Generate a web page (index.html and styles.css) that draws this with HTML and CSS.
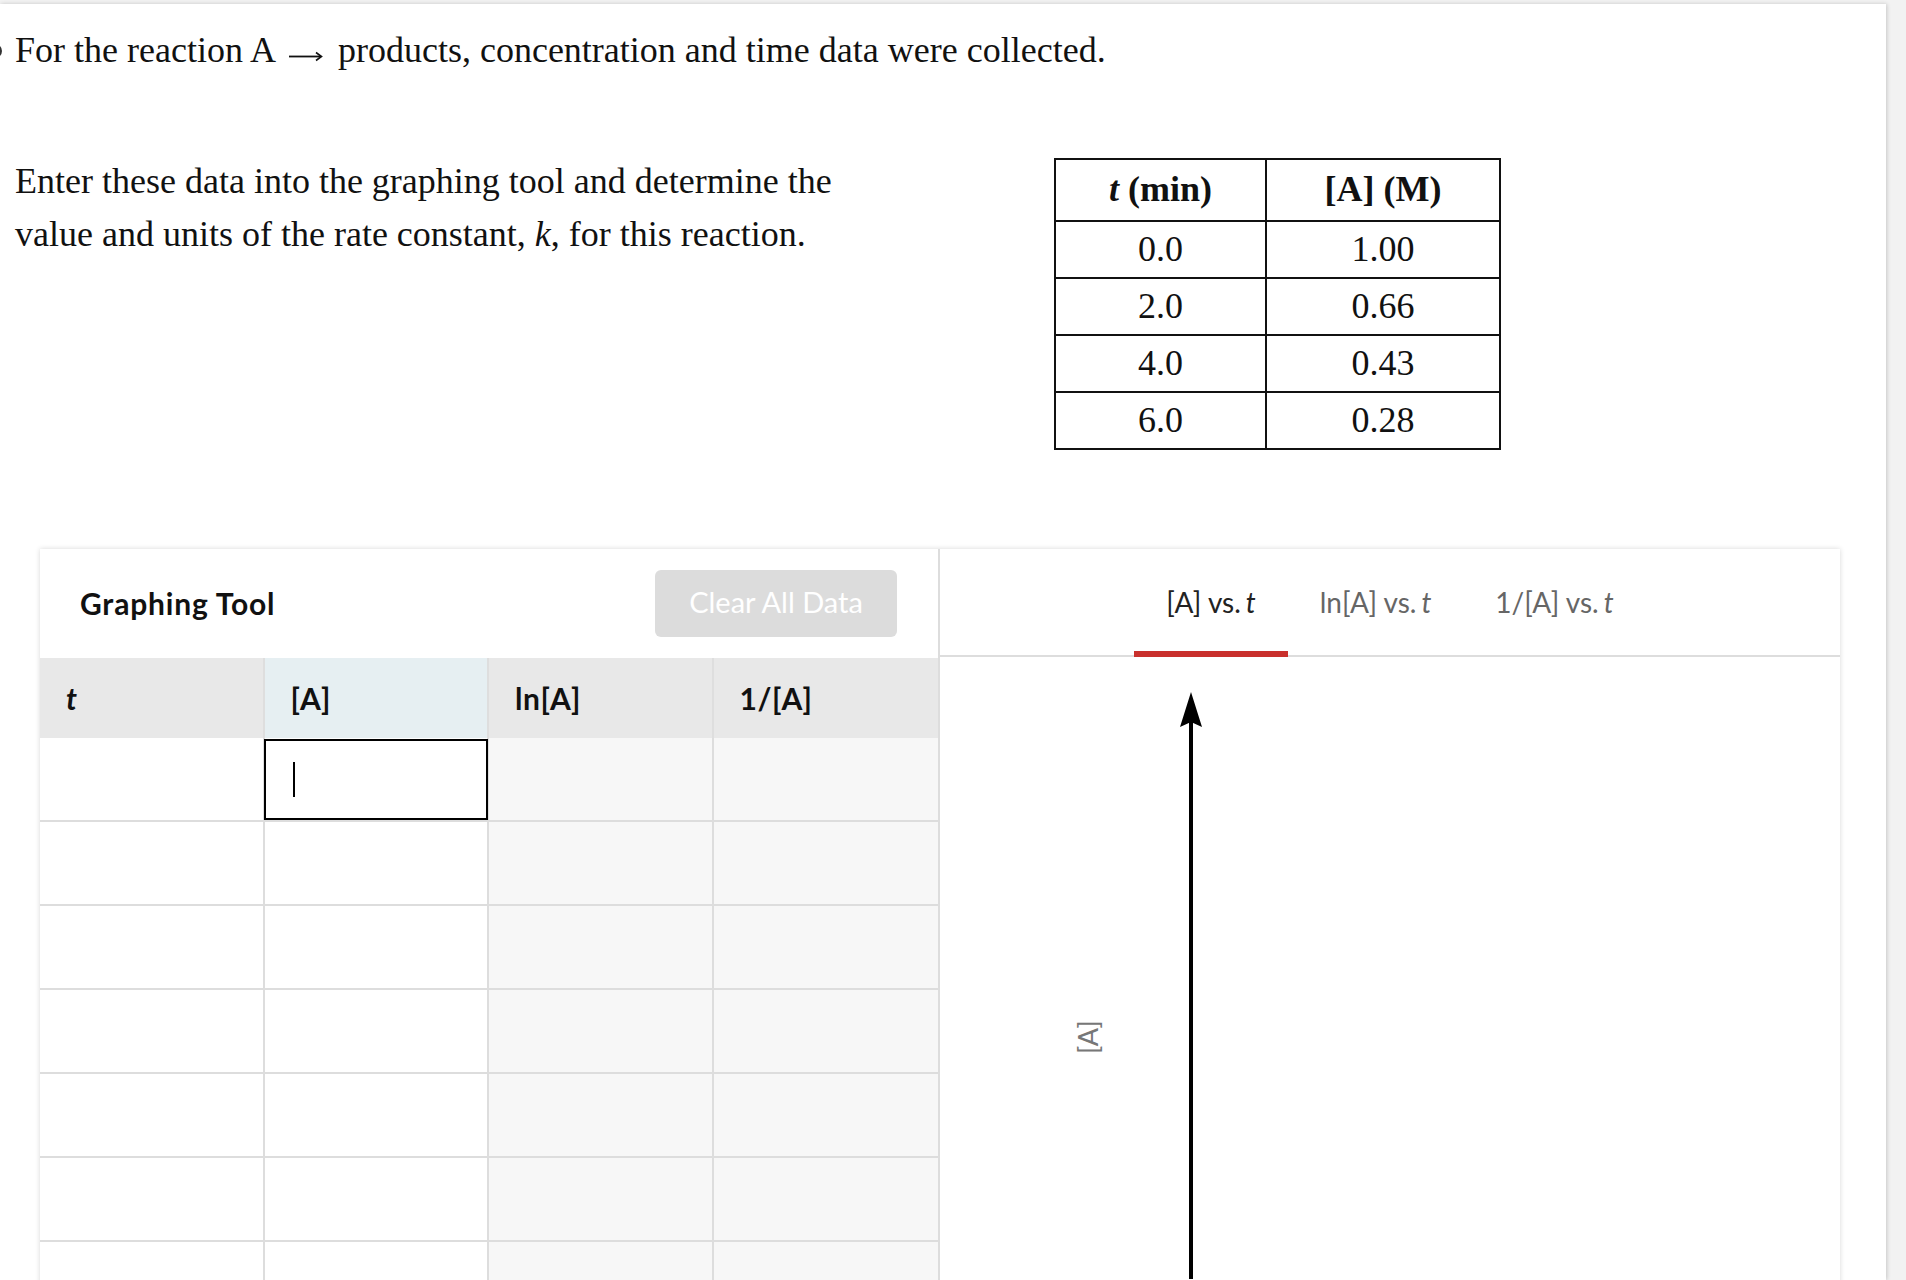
FILE: index.html
```html
<!DOCTYPE html>
<html lang="en">
<head>
<meta charset="utf-8">
<title>Graphing Tool</title>
<link rel="stylesheet" href="styles.css">
</head>
<body>
<div class="sheet">
  <p class="q1"><span class="dot"></span>For the reaction A <svg class="rarrow" width="34" height="12" viewBox="0 0 34 12"><path d="M0 6.5 H32" stroke="#111" stroke-width="1.8" fill="none"/><path d="M27 2.5 L32.5 6.5 L27 10.5" stroke="#111" stroke-width="1.6" fill="none"/></svg> products, concentration and time data were collected.</p>

  <div class="problem">
    <p class="qtext">Enter these data into the graphing tool and determine the<br>value and units of the rate constant, <i>k</i>, for this reaction.</p>
    <table class="data">
      <thead>
        <tr><th class="c1"><i>t</i> (min)</th><th class="c2">[A] (M)</th></tr>
      </thead>
      <tbody>
        <tr><td>0.0</td><td>1.00</td></tr>
        <tr><td>2.0</td><td>0.66</td></tr>
        <tr><td>4.0</td><td>0.43</td></tr>
        <tr><td>6.0</td><td>0.28</td></tr>
      </tbody>
    </table>
  </div>

  <div class="card">
    <div class="left">
      <div class="lhead">
        <h2 class="title">Graphing Tool</h2>
        <button class="clear" type="button">Clear All Data</button>
      </div>
      <div class="grid">
        <div class="hc"><i>t</i></div>
        <div class="hc sel">[A]</div>
        <div class="hc">ln[A]</div>
        <div class="hc last">1/[A]</div>

        <div class="dc"></div>
        <div class="dc"><div class="input"><span class="caret"></span></div></div>
        <div class="dc calc"></div>
        <div class="dc calc last"></div>

        <div class="dc"></div><div class="dc"></div><div class="dc calc"></div><div class="dc calc last"></div>
        <div class="dc"></div><div class="dc"></div><div class="dc calc"></div><div class="dc calc last"></div>
        <div class="dc"></div><div class="dc"></div><div class="dc calc"></div><div class="dc calc last"></div>
        <div class="dc"></div><div class="dc"></div><div class="dc calc"></div><div class="dc calc last"></div>
        <div class="dc"></div><div class="dc"></div><div class="dc calc"></div><div class="dc calc last"></div>
        <div class="dc"></div><div class="dc"></div><div class="dc calc"></div><div class="dc calc last"></div>
      </div>
    </div>
    <div class="right">
      <div class="tabs">
        <div class="tab active">[A] vs.<i class="var">t</i></div>
        <div class="tab">ln[A] vs.<i class="var">t</i></div>
        <div class="tab">1/[A] vs.<i class="var">t</i></div>
      </div>
      <svg class="plot" width="900" height="622" viewBox="0 0 900 622">
        <line x1="251" y1="64" x2="251" y2="622" stroke="#000" stroke-width="4"/>
        <path d="M251 35 L262 70 L251 65 L240 70 Z" fill="#000"/>
        <text x="147" y="380" transform="rotate(-90 147 380)" text-anchor="middle" dominant-baseline="central" class="axis">[A]</text>
      </svg>
    </div>
  </div>
</div>
</body>
</html>
```

FILE: styles.css
```css
html, body {
  margin: 0;
  padding: 0;
}
body {
  background: #f2f2f2;
  overflow: hidden;
}
.sheet {
  margin-top: 4px;
  width: 1886px;
  height: 1276px;
  background: #ffffff;
  box-shadow: 1px 0 4px rgba(0, 0, 0, 0.18);
  overflow: hidden;
  font-family: "Liberation Serif", "Times New Roman", serif;
  color: #111;
}
.q1 {
  margin: 0;
  padding-top: 22px;
  font-size: 36px;
  line-height: 48px;
  white-space: nowrap;
}
.dot {
  display: inline-block;
  width: 14px;
  height: 14px;
  border-radius: 50%;
  background: #333;
  margin-left: -12px;
  margin-right: 13px;
  vertical-align: 4px;
}
.rarrow {
  vertical-align: 0;
  margin: 0 6px;
}
.problem {
  display: flex;
  align-items: flex-start;
  padding-left: 15px;
  margin-top: 81px;
}
.qtext {
  margin: 0;
  width: 1039px;
  flex: none;
  font-size: 36px;
  line-height: 53px;
}
.data {
  margin-top: 3px;
  border-collapse: collapse;
  border: 2px solid #000;
  font-size: 36px;
  text-align: center;
}
.data th, .data td {
  border: 2px solid #111;
  padding: 0;
  line-height: 1;
}
.data th {
  height: 57.5px;
  font-weight: bold;
  padding-bottom: 2px;
}
.data td {
  height: 55px;
}
.data .c1 { width: 209px; }
.data .c2 { width: 232px; }

.card {
  margin-top: 99px;
  margin-left: 40px;
  width: 1800px;
  height: 760px;
  display: flex;
  background: #fff;
  box-shadow: 0 0 5px rgba(0, 0, 0, 0.16);
  font-family: Lato, "Open Sans", sans-serif;
  color: #222;
}
.left {
  width: 898px;
  flex: none;
  border-right: 2px solid #dddddd;
}
.lhead {
  height: 109px;
  display: flex;
  align-items: center;
  justify-content: space-between;
  padding: 0 41px 0 40px;
}
.title {
  margin: 0 0 1px 0;
  font-size: 30px;
  letter-spacing: 0.8px;
  font-weight: 700;
  color: #111;
}
.clear {
  width: 242px;
  height: 67px;
  border: none;
  border-radius: 6px;
  background: #dcdcdc;
  color: #ffffff;
  font-family: Lato, "Open Sans", sans-serif;
  font-size: 29px;
  padding: 0 0 3px;
}
.grid {
  display: grid;
  grid-template-columns: 224.5px 224.5px 224.5px 224.5px;
  grid-template-rows: 80px repeat(7, 84px);
}
.hc {
  background: #e8e8e8;
  border-right: 2px solid #dedede;
  display: flex;
  align-items: center;
  padding-left: 26px;
  font-size: 30px;
  letter-spacing: 0.6px;
  font-weight: 700;
  color: #111;
}
.hc.sel {
  background: #e6eff2;
}
.hc.last, .dc.last {
  border-right: none;
}
.dc {
  background: #ffffff;
  border-right: 2px solid #dddddd;
  border-bottom: 2px solid #dddddd;
  display: flex;
}
.dc.calc {
  background: #f7f7f7;
}
.input {
  flex: 1;
  margin: 1px -1px 0 -1px;
  border: 2px solid #000;
  display: flex;
  align-items: center;
  background: #fff;
}
.caret {
  display: block;
  width: 2px;
  height: 35px;
  margin-left: 27px;
  background: #000;
}
.right {
  flex: 1;
  display: flex;
  flex-direction: column;
}
.tabs {
  height: 106px;
  border-bottom: 2px solid #dddddd;
  display: flex;
  justify-content: center;
}
.tab {
  margin-bottom: -2px;
  padding: 5px 32px 0;
  display: flex;
  align-items: center;
  font-size: 28px;
  color: #666;
  border-bottom: 6px solid transparent;
  box-sizing: border-box;
  white-space: nowrap;
}
.tab .var {
  margin-left: 5px;
}
.tab.active {
  color: #222;
  border-bottom-color: #c9302c;
}
.plot {
  display: block;
}
.axis {
  font-family: Lato, "Open Sans", sans-serif;
  font-size: 27px;
  fill: #777;
}
```
